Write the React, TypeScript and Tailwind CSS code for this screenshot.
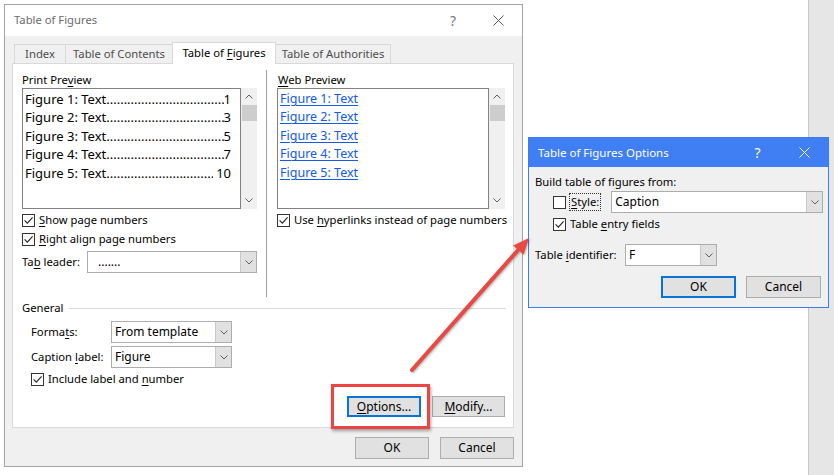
import type { ReactNode } from "react";
import clsx from "clsx";

function U({ children }: { children: ReactNode }) {
  return <span className="underline decoration-1 underline-offset-[2px]">{children}</span>;
}

function Check({ checked }: { checked: boolean }) {
  return (
    <span className="flex h-[13px] w-[13px] shrink-0 items-center justify-center border border-[#333333] bg-white">
      {checked && (
        <svg width="11" height="11" viewBox="0 0 11 11">
          <path d="M1.6 5.4 L4.3 8.2 L9.6 2.3" fill="none" stroke="#222" strokeWidth="1.1" />
        </svg>
      )}
    </span>
  );
}

function Chevron({ up }: { up?: boolean }) {
  return (
    <svg width="8" height="5" viewBox="0 0 8 5">
      <path
        d={up ? "M0.5 4.5 L4 1 L7.5 4.5" : "M0.5 0.5 L4 4 L7.5 0.5"}
        fill="none"
        stroke="#606060"
        strokeWidth="1"
      />
    </svg>
  );
}

function CloseX({ color }: { color: string }) {
  return (
    <svg width="11" height="11" viewBox="0 0 11 11">
      <path d="M0.5 0.5 L10.5 10.5 M10.5 0.5 L0.5 10.5" stroke={color} strokeWidth="1" />
    </svg>
  );
}

function Select({ value, className }: { value: string; className: string }) {
  return (
    <div className={clsx("flex h-[22px] shrink-0 border border-[#adadad] bg-white", className)}>
      <span className="flex flex-1 items-center pl-[3px] text-[12px] text-black">{value}</span>
      <span className="flex w-[16px] items-center justify-center border-l border-[#c8c8c8] bg-[#e1e1e1]">
        <Chevron />
      </span>
    </div>
  );
}

function Btn({ children, className, focused }: { children: ReactNode; className: string; focused?: boolean }) {
  return (
    <div
      className={clsx(
        "flex items-center justify-center bg-[#e1e1e1] text-[12px] text-black",
        focused ? "border-2 border-[#0a74d6]" : "border border-[#adadad]",
        className,
      )}
    >
      <span>{children}</span>
    </div>
  );
}

function Scrollbar() {
  return (
    <div className="flex w-[16px] flex-col items-center bg-[#f0f0f0]">
      <span className="flex h-[17px] items-center">
        <Chevron up />
      </span>
      <span className="h-[16px] w-[15px] bg-[#cdcdcd]" />
      <span className="flex-1" />
      <span className="flex h-[17px] items-center">
        <Chevron />
      </span>
    </div>
  );
}

const printItems = [
  { label: "Figure 1: Text", page: "1" },
  { label: "Figure 2: Text", page: "3" },
  { label: "Figure 3: Text", page: "5" },
  { label: "Figure 4: Text", page: "7" },
  { label: "Figure 5: Text", page: "10" },
];

const tabs = [
  { label: <>Index</>, w: "w-[52px]" },
  { label: <>Table of Contents</>, w: "w-[108px]" },
  { label: <>Table of <U>F</U>igures</>, w: "w-[104px]", active: true },
  { label: <>Table of Authorities</>, w: "w-[116px]" },
];

function MainDialog() {
  return (
    <div className="ml-[4px] mt-[4px] flex h-[463px] w-[519px] shrink-0 flex-col border border-[#a3a3a3] bg-[#f0f0f0] text-[11.25px]">
      <div className="flex h-[31px] items-center bg-white pl-[9px] pr-[2px]">
        <span className="text-[#6b6b6b]">Table of Figures</span>
        <span className="ml-auto w-[46px] text-center text-[14px] text-[#7a7a7a]">?</span>
        <span className="flex w-[44px] justify-center">
          <CloseX color="#555" />
        </span>
      </div>

      <div className="ml-[9px] mt-[6px] flex h-[21px] items-end">
        {tabs.map((t, i) => (
          <div
            key={i}
            className={clsx(
              "flex items-center justify-center border border-b-0 border-[#d9d9d9]",
              t.w,
              i > 0 && "-ml-px",
              t.active
                ? "relative z-10 -mb-px h-[22px] bg-white pb-[1px] text-black"
                : "h-[19px] bg-[#f0f0f0] pt-[1px] text-[#4d4d4d]",
            )}
          >
            <span className="whitespace-nowrap">{t.label}</span>
          </div>
        ))}
      </div>

      <div className="ml-[7px] flex h-[365px] w-[502px] flex-col border border-[#d9d9d9] bg-white text-black">
        <div className="flex h-[233px]">
          <div className="ml-[9px] flex w-[235px] flex-col">
            <span className="mt-[8px] h-[16px] leading-[16px]">
              Print Pre<U>v</U>iew
            </span>
            <div className="flex h-[121px]">
              <div className="w-[219px] border border-[#828282] pl-[2px] pr-[9px] pt-[1px] text-[13px]">
                {printItems.map((it) => (
                  <div key={it.label} className="flex h-[18.5px] items-center whitespace-nowrap">
                    <span>{it.label}</span>
                    <span className="flex-1 overflow-hidden">{".".repeat(60)}</span>
                    <span className={it.page.length > 1 ? "pl-[3px]" : ""}>{it.page}</span>
                  </div>
                ))}
              </div>
              <Scrollbar />
            </div>
            <div className="mt-[2px] flex h-[19px] items-center gap-[4px]">
              <Check checked />
              <span>
                <U>S</U>how page numbers
              </span>
            </div>
            <div className="flex h-[19px] items-center gap-[4px]">
              <Check checked />
              <span>
                <U>R</U>ight align page numbers
              </span>
            </div>
            <div className="mt-[2px] flex h-[22px] items-center">
              <span className="w-[65px]">
                Ta<U>b</U> leader:
              </span>
              <Select value="......." className="w-[170px] [&>span:first-child]:pl-[10px]" />
            </div>
          </div>

          <div className="ml-[9px] mt-[6px] w-px bg-[#a0a0a0]" />

          <div className="ml-[10px] flex w-[228px] flex-col">
            <span className="mt-[8px] h-[16px] pl-[1px] leading-[16px]">
              <U>W</U>eb Preview
            </span>
            <div className="flex h-[121px]">
              <div className="w-[212px] border border-[#828282] pl-[2px] pt-[1px] text-[12.5px] text-[#145ae6]">
                {printItems.map((it) => (
                  <div key={it.label} className="flex h-[18.5px] items-center">
                    <span className="underline decoration-1 underline-offset-[2px]">{it.label}</span>
                  </div>
                ))}
              </div>
              <Scrollbar />
            </div>
            <div className="mt-[2px] flex h-[19px] items-center gap-[4px] whitespace-nowrap">
              <Check checked />
              <span>
                Use <U>h</U>yperlinks instead of page numbers
              </span>
            </div>
          </div>
        </div>

        <div className="mt-[3px] flex h-[16px] items-center">
          <span className="ml-[9px]">General</span>
          <span className="ml-[6px] mr-[7px] h-px flex-1 bg-[#dcdcdc]" />
        </div>
        <div className="ml-[18px] mt-[5px] flex h-[22px] items-center">
          <span className="w-[80px]">
            Forma<U>t</U>s:
          </span>
          <Select value="From template" className="w-[121px]" />
        </div>
        <div className="ml-[18px] mt-[3px] flex h-[22px] items-center">
          <span className="w-[80px]">
            Caption <U>l</U>abel:
          </span>
          <Select value="Figure" className="w-[121px]" />
        </div>
        <div className="ml-[18px] mt-[2px] flex h-[19px] items-center gap-[4px]">
          <Check checked />
          <span>
            Include label and <U>n</U>umber
          </span>
        </div>
        <div className="mt-[7px] flex h-[21px] justify-end gap-[11px] pr-[8px]">
          <Btn className="w-[74px]" focused>
            <U>O</U>ptions...
          </Btn>
          <Btn className="w-[73px]">
            <U>M</U>odify...
          </Btn>
        </div>
      </div>

      <div className="mt-[9px] flex h-[22px] justify-end gap-[11px] pr-[8px]">
        <Btn className="w-[74px]">OK</Btn>
        <Btn className="w-[74px]">Cancel</Btn>
      </div>
    </div>
  );
}

function OptionsDialog() {
  return (
    <div className="absolute left-[528px] top-[137px] z-20 flex h-[171px] w-[301px] flex-col border border-[#3c7cf2] bg-[#f0f0f0] text-[11.25px] text-black">
      <div className="flex h-[29px] items-center bg-[#3f7ff3] pl-[9px]">
        <span className="text-[11.5px] text-white">Table of Figures Options</span>
        <span className="ml-auto w-[47px] text-center text-[14px] text-white">?</span>
        <span className="flex w-[47px] justify-center">
          <CloseX color="#fff" />
        </span>
      </div>
      <span className="ml-[6px] mt-[7px] h-[16px] leading-[16px]">Build table of figures from:</span>
      <div className="ml-[24px] mt-[1px] flex h-[22px] items-center">
        <Check checked={false} />
        <span className="ml-[3px] border border-dotted border-[#333] px-[1px] leading-[16px]">
          <U>S</U>tyle:
        </span>
        <Select value="Caption" className="ml-[10px] w-[212px]" />
      </div>
      <div className="ml-[24px] mt-[2px] flex h-[19px] items-center gap-[4px]">
        <Check checked />
        <span>
          Table <U>e</U>ntry fields
        </span>
      </div>
      <div className="ml-[6px] mt-[10px] flex h-[22px] items-center">
        <span className="w-[90px]">
          Table <U>i</U>dentifier:
        </span>
        <Select value="F" className="w-[92px]" />
      </div>
      <div className="mt-[10px] flex h-[22px] justify-end gap-[10px] pr-[7px]">
        <Btn className="w-[75px]" focused>
          OK
        </Btn>
        <Btn className="w-[75px]">Cancel</Btn>
      </div>
    </div>
  );
}

export default function App() {
  return (
    <div className="relative flex h-[475px] w-[834px] overflow-hidden bg-white font-['Noto_Sans',sans-serif]">
      <MainDialog />
      <div className="ml-auto h-full w-[26px] border-l border-[#c6c6c6] bg-[#e6e6e6]" />
      <OptionsDialog />

      {/* red callout */}
      <div className="pointer-events-none absolute left-[331px] top-[384px] z-30 h-[45px] w-[99px] border-[3px] border-[#ee4444] shadow-[1px_2px_3px_rgba(0,0,0,0.35)]" />
      <svg
        className="pointer-events-none absolute left-0 top-0 z-30 drop-shadow-[1px_1px_1px_rgba(0,0,0,0.3)]"
        width="834"
        height="475"
        viewBox="0 0 834 475"
      >
        <line x1="412" y1="370" x2="519" y2="249" stroke="#e84a43" strokeWidth="4" strokeLinecap="round" />
        <polygon points="529,238 523.6,254.6 513.2,245.4" fill="#e84a43" />
      </svg>
    </div>
  );
}
